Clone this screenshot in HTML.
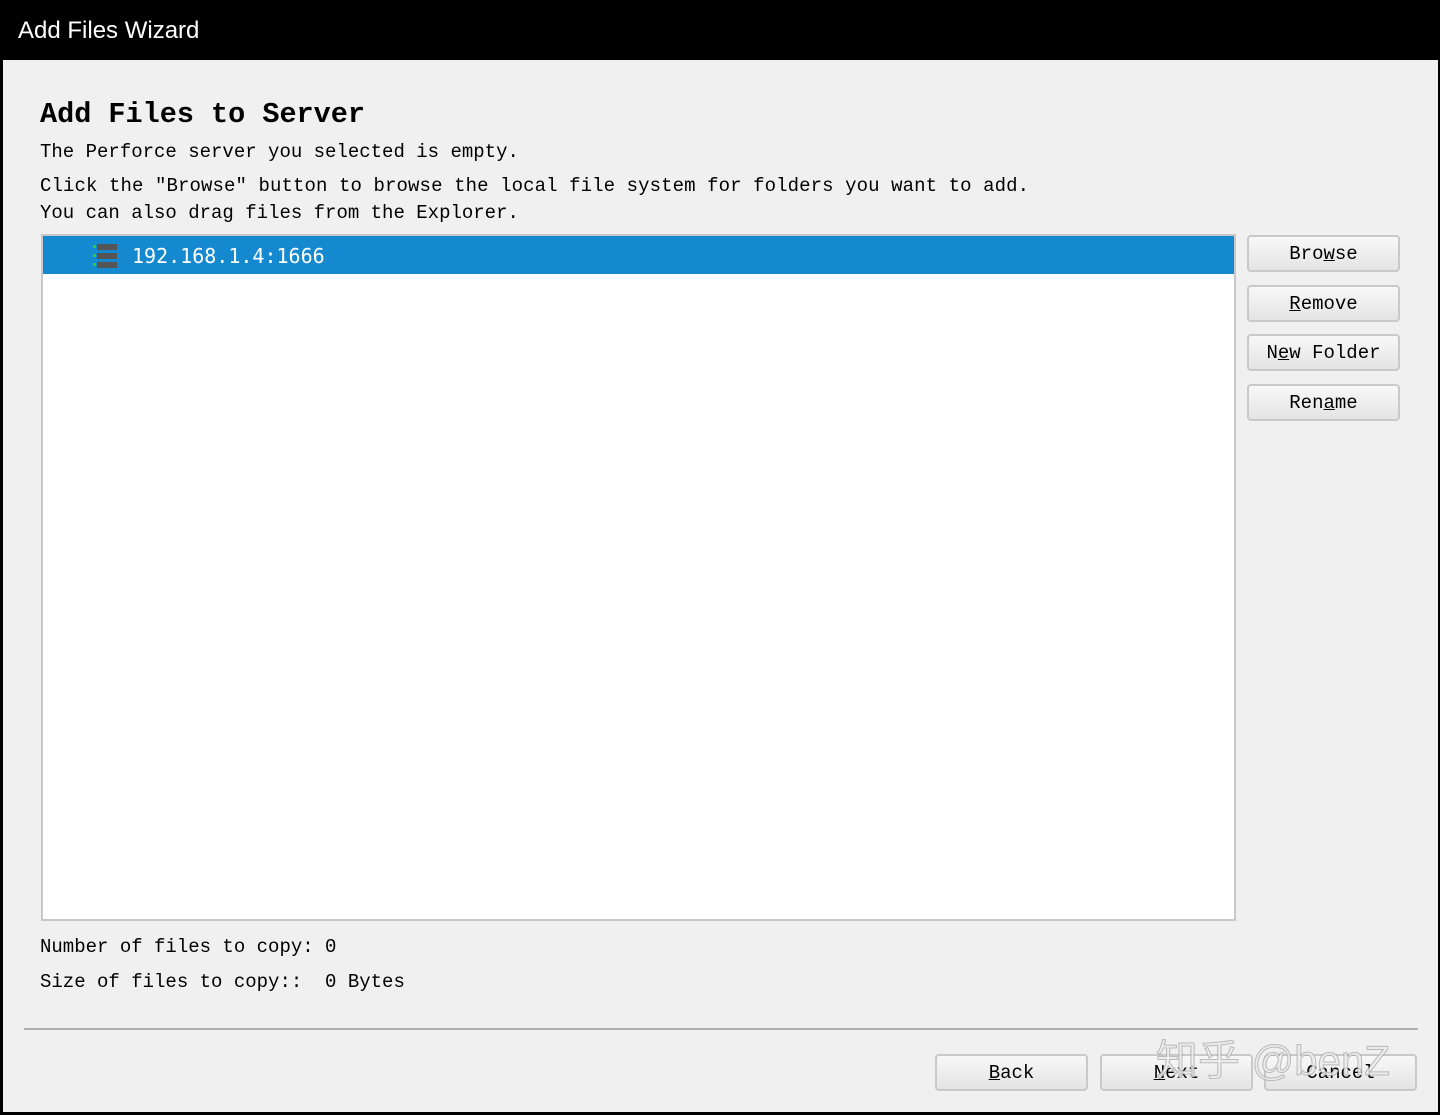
<!DOCTYPE html>
<html><head><meta charset="utf-8"><style>
*{margin:0;padding:0;box-sizing:border-box}
body{width:1440px;height:1115px;background:#000;position:relative;overflow:hidden;font-family:"Liberation Mono","Noto Serif CJK SC",monospace;color:#000}
.title{position:absolute;left:0;top:0;width:1440px;height:60px;background:#000;color:#fff;font-family:"Liberation Sans",sans-serif;font-size:24px;line-height:62px;padding-left:18px}
.win{position:absolute;left:3px;top:60px;width:1435px;height:1052px;background:#f0f0f0}
.t{position:absolute;font-size:19px;white-space:pre;line-height:22px}
h1{position:absolute;left:37px;top:38px;font-size:28.5px;font-weight:bold;line-height:34px;white-space:pre}
.list{position:absolute;left:38px;top:174px;width:1195px;height:687px;background:#fff;border:2px solid #c8c8c8}
.sel{position:absolute;left:0;top:0;right:0;height:38px;background:#1589d0;color:#fff;font-family:"DejaVu Sans Mono",monospace;font-size:20px;line-height:38px}
.btn{position:absolute;height:37px;border:2px solid #c9c9c9;border-radius:4px;background:linear-gradient(#f8f8f8,#e4e4e4);font-size:19px;text-align:center;line-height:35px}
.sep{position:absolute;left:21px;top:968px;width:1394px;height:2px;background:#b0b0b0}
</style></head><body>
<div class="title">Add Files Wizard</div>
<div class="win">
<h1>Add Files to Server</h1>
<div class="t" style="left:37px;top:81px">The Perforce server you selected is empty.</div>
<div class="t" style="left:37px;top:115px;letter-spacing:0.1px">Click the "Browse" button to browse the local file system for folders you want to add.</div>
<div class="t" style="left:37px;top:142px">You can also drag files from the Explorer.</div>
<div class="list"><div class="sel">
<svg style="position:absolute;left:48px;top:6px" width="28" height="28"><rect x="6" y="2" width="20" height="6" fill="#555"/><rect x="6" y="11" width="20" height="6" fill="#555"/><rect x="6" y="20" width="20" height="6" fill="#555"/><rect x="2" y="3" width="3" height="3" fill="#3c3"/><rect x="2" y="12" width="3" height="3" fill="#3c3"/><rect x="2" y="21" width="3" height="3" fill="#3c3"/></svg>
<span style="position:absolute;left:89px;top:1px">192.168.1.4:1666</span></div></div>
<div class="btn" style="left:1244px;top:175px;width:153px">Bro<u>w</u>se</div>
<div class="btn" style="left:1244px;top:225px;width:153px"><u>R</u>emove</div>
<div class="btn" style="left:1244px;top:274px;width:153px">N<u>e</u>w Folder</div>
<div class="btn" style="left:1244px;top:324px;width:153px">Ren<u>a</u>me</div>
<div class="t" style="left:37px;top:876px">Number of files to copy: 0</div>
<div class="t" style="left:37px;top:911px">Size of files to copy::  0 Bytes</div>
<div class="sep"></div>
<div class="btn" style="left:932px;top:994px;width:153px"><u>B</u>ack</div>
<div class="btn" style="left:1097px;top:994px;width:153px"><u>N</u>ext</div>
<div class="btn" style="left:1261px;top:994px;width:153px">Cancel</div>
<div style="position:absolute;left:1153px;top:967px;font-family:'Liberation Sans','Noto Sans CJK SC',sans-serif;font-size:42px;color:rgba(235,235,235,0.85);white-space:pre;-webkit-text-stroke:1px rgba(150,150,150,0.6)">知乎 @benZ</div>
</div>
</body></html>
